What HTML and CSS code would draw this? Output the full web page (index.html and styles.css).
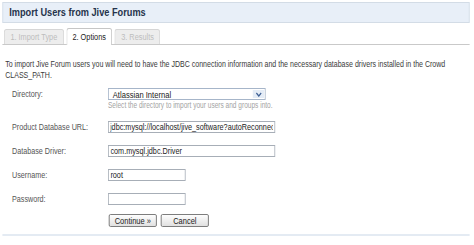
FILE: index.html
```html
<!DOCTYPE html>
<html lang="en">
<head>
  <meta charset="UTF-8">
  <title>Import Users from Jive Forums</title>
  <link rel="stylesheet" href="styles.css">
</head>
<body>
  <!-- the captured page is squeezed horizontally, so the whole panel is scaled on x -->
  <div class="frame">
    <div class="page">
      <div class="titleBar">Import Users from Jive Forums</div>

      <!-- wizard steps -->
      <div class="tabs">
        <span class="tab">1. Import Type</span>
        <span class="tab active">2. Options</span>
        <span class="tab">3. Results</span>
      </div>

      <p class="intro">To import Jive Forum users you will need to have the JDBC connection information and the necessary database drivers installed in the Crowd CLASS_PATH.</p>

      <form class="importForm">
        <div class="row dirRow">
          <label class="fieldLabel">Directory:</label>
          <div class="select">
            <span>Atlassian Internal</span>
            <span class="selectArrow">
              <svg width="9" height="5" viewBox="0 0 9 5"><path d="M1.5 1 L4.5 4 L7.5 1" fill="none" stroke="#3d5f94" stroke-width="1.5"/></svg>
            </span>
          </div>
        </div>
        <div class="hint">Select the directory to import your users and groups into.</div>
        <div class="row">
          <label class="fieldLabel">Product Database URL:</label>
          <input class="text wide" type="text" value="jdbc:mysql://localhost/jive_software?autoReconnect=true">
        </div>
        <div class="row">
          <label class="fieldLabel">Database Driver:</label>
          <input class="text wide" type="text" value="com.mysql.jdbc.Driver">
        </div>
        <div class="row">
          <label class="fieldLabel">Username:</label>
          <input class="text short" type="text" value="root">
        </div>
        <div class="row">
          <label class="fieldLabel">Password:</label>
          <input class="text short" type="password" value="">
        </div>
        <div class="buttons">
          <button type="button" class="btn">Continue &raquo;</button>
          <button type="button" class="btn">Cancel</button>
        </div>
      </form>

      <div class="footerLine"></div>
    </div>
  </div>
</body>
</html>
```

FILE: styles.css
```css
body {
  margin: 0;
  background: #fff;
  font-family: "Liberation Sans", Arial, sans-serif;
  font-size: 9px;
  color: #333;
}
.frame {
  width: 474px;
  height: 245px;
  overflow: hidden;
}
.page {
  width: 584px;
  padding: 2px 0 0 2.5px;
  transform: scaleX(0.8);
  transform-origin: 0 0;
}
.titleBar {
  height: 19px;
  line-height: 19px;
  padding-left: 8px;
  background: #e8eff8;
  border: 1px solid #d3dce6;
  font-size: 11.5px;
  font-weight: bold;
  color: #26334b;
}
.tabs {
  display: flex;
  align-items: flex-end;
  gap: 3px;
  height: 17px;
  margin-top: 4px;
  padding-left: 2.5px;
  border-bottom: 1px solid #c9c9c9;
}
.tab {
  height: 14px;
  line-height: 15px;
  padding: 0 7px;
  border: 1px solid #d6d6d6;
  border-bottom: none;
  border-radius: 3px 3px 0 0;
  background: #ededed;
  color: #bdbdbd;
  font-size: 9.2px;
}
.tab.active {
  height: 16px;
  line-height: 17px;
  margin-bottom: -1px;
  background: #fff;
  color: #222;
  border-color: #c6c6c6;
}
.intro {
  width: 575px;
  margin: 14px 0 0 4px;
  line-height: 11px;
  font-size: 8.8px;
  color: #3a3a3a;
}
.importForm {
  margin-top: 7px;
  padding-left: 12.5px;
}
.row {
  display: flex;
  align-items: center;
  height: 12px;
  margin-bottom: 12px;
}
.dirRow {
  margin-bottom: 1px;
}
.fieldLabel {
  width: 120px;
  color: #555;
}
.select {
  box-sizing: border-box;
  width: 197px;
  height: 12px;
  border: 1px solid #a6b5c9;
  display: flex;
  align-items: center;
  justify-content: space-between;
  padding: 0 1px 0 5px;
  font-size: 9.5px;
  color: #222;
}
.selectArrow {
  width: 14px;
  height: 8px;
  display: flex;
  align-items: center;
  justify-content: center;
  background: #e4ecf6;
}
.hint {
  height: 10px;
  line-height: 10px;
  margin: 0 0 10px 120px;
  font-size: 8.2px;
  color: #a3a3a3;
}
.text {
  box-sizing: border-box;
  height: 12px;
  margin: 0;
  border: 1px solid #a7aeb7;
  padding: 0 2px;
  font-family: "Liberation Sans", Arial, sans-serif;
  font-size: 9.1px;
  color: #222;
}
.wide {
  width: 209px;
}
.short {
  width: 97px;
}
.buttons {
  display: flex;
  gap: 5px;
  margin: -3px 0 0 121px;
}
.btn {
  box-sizing: border-box;
  width: 60px;
  height: 13px;
  padding: 0;
  border: 1px solid #6e6e6e;
  border-radius: 2px;
  background: linear-gradient(#fdfdfd, #e1e1e1);
  font-family: "Liberation Sans", Arial, sans-serif;
  font-size: 9.4px;
  line-height: 11px;
  color: #222;
}
.footerLine {
  margin-top: 7px;
  height: 2px;
  background: #e4ebf3;
}
```
